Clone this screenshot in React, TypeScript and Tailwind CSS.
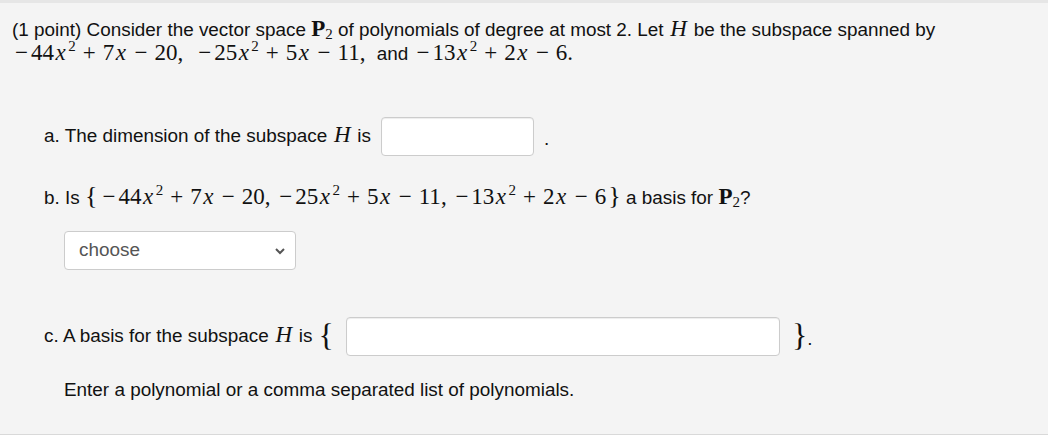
import React from "react";

const M = ({ children }: { children: React.ReactNode }) => (
  <span className="[font-family:'Liberation_Serif',serif] text-[23px] leading-none whitespace-nowrap">{children}</span>
);
const V = ({ children }: { children: React.ReactNode }) => <span className="italic px-[1.5px]">{children}</span>;
const Sup = ({ children }: { children: React.ReactNode }) => (
  <sup className="text-[15px] top-[-9px] ml-[1px]">{children}</sup>
);
const Op = ({ children }: { children: React.ReactNode }) => <span className="mx-[7px]">{children}</span>;
const Neg = () => <span className="px-[3px]">−</span>;
const P2 = () => (
  <M>
    <span className="font-bold">P</span>
    <sub className="text-[15px] leading-none bottom-[-3px]">2</sub>
  </M>
);
const Poly = ({ a, b, c }: { a: string; b: string; c: string }) => (
  <>
    <Neg />
    {a}
    <V>x</V>
    <Sup>2</Sup>
    <Op>+</Op>
    {b}
    <V>x</V>
    <Op>−</Op>
    {c}
  </>
);

export default function App() {
  return (
    <div className="w-[1050px] h-[439px] bg-white [font-family:'Liberation_Sans',Arial,sans-serif] text-[18.9px] text-[#111]">
      <div className="w-[1048px] h-[435px] bg-[#f4f4f4] border-t-[3px] border-t-[#e6e6e6] border-b border-b-[#d9d9d9] pl-[12px] pt-[14px]">
        <div className="leading-[23px]">
          (1 point) Consider the vector space <P2 /> of polynomials of degree at most 2. Let <M><V>H</V></M> be the subspace spanned by
          <br />
          <M>
            <Poly a="44" b="7" c="20" />,
          </M>
          <span className="ml-[12px]" />
          <M>
            <Poly a="25" b="5" c="11" />,
          </M>{" "}
          <span className="ml-[6px]">and</span>{" "}
          <M>
            <Poly a="13" b="2" c="6" />.
          </M>
        </div>

        <div className="ml-[32px] mt-[52px] flex items-center h-[39px]">
          <span>
            a. The dimension of the subspace <M><V>H</V></M> is
          </span>
          <div className="ml-[10px] w-[153px] h-[39px] bg-white border border-[#ccc] rounded-[4px] shadow-[inset_0_1px_1px_rgba(0,0,0,0.075)]" />
          <span className="ml-[10px] mt-[6px]">.</span>
        </div>

        <div className="ml-[32px] mt-[22px] flex items-center h-[39px]">
          <span>
            b. Is{" "}
            <M>
              <span className="text-[26px] mr-[2px]">{"{"}</span>
              <Poly a="44" b="7" c="20" />, <Poly a="25" b="5" c="11" />, <Poly a="13" b="2" c="6" />
              <span className="text-[26px] ml-[2px]">{"}"}</span>
            </M>{" "}
            a basis for <P2 />?
          </span>
        </div>

        <div className="ml-[52px] mt-[14px] w-[232px] h-[39px] bg-white border border-[#ccc] rounded-[4px] flex items-center justify-between pl-[14px] pr-[9px] text-[#555]">
          <span>choose</span>
          <svg width="12" height="8" viewBox="0 0 12 8">
            <path d="M2 2 L6 6 L10 2" fill="none" stroke="#555" strokeWidth="2" />
          </svg>
        </div>

        <div className="ml-[32px] mt-[47px] flex items-center h-[39px]">
          <span>
            c. A basis for the subspace <M><V>H</V></M> is
          </span>
          <span className="ml-[6px] [font-family:'Liberation_Serif',serif] text-[32px] leading-none relative top-[-2px]">{"{"}</span>
          <div className="ml-[12px] w-[434px] h-[39px] bg-white border border-[#ccc] rounded-[4px] shadow-[inset_0_1px_1px_rgba(0,0,0,0.075)]" />
          <span className="ml-[12px] [font-family:'Liberation_Serif',serif] text-[32px] leading-none relative top-[-2px]">{"}"}</span>
          <span className="mt-[6px]">.</span>
        </div>

        <div className="ml-[52px] mt-[23px] leading-[22px]">Enter a polynomial or a comma separated list of polynomials.</div>
      </div>
    </div>
  );
}
